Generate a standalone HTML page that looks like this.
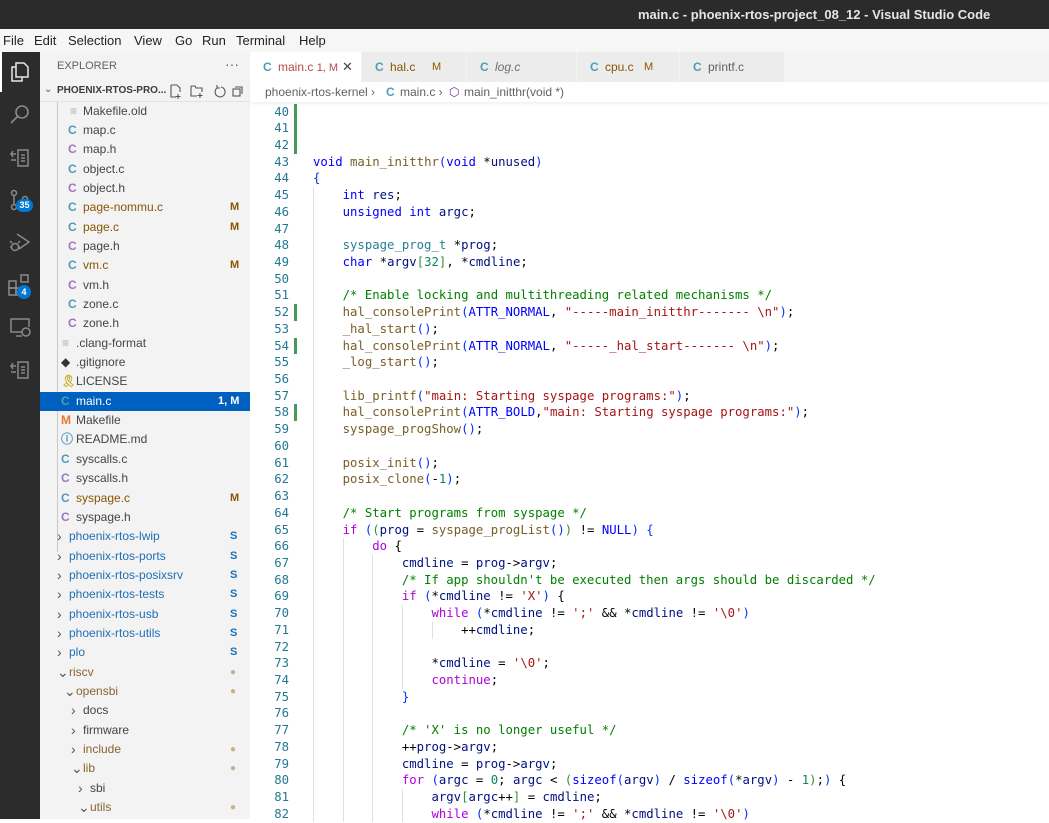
<!DOCTYPE html>
<html><head><meta charset="utf-8">
<style>
*{margin:0;padding:0;box-sizing:border-box}
body{width:1049px;height:819px;overflow:hidden;background:#fff;font-family:"Liberation Sans","DejaVu Sans",sans-serif;position:relative}
.abs{position:absolute}
#title{left:0;top:0;width:1049px;height:29px;background:#2b2b2b;color:#e6e6e6;font-weight:bold;font-size:13px}
#title span{position:absolute;left:638px;top:7px}
#menu{left:0;top:29px;width:1049px;height:23px;background:#f6f6f6;font-size:13px;color:#222}
#menu span{position:absolute;top:4px}
#act{left:0;top:52px;width:40px;height:767px;background:#2c2c2c}
#side{left:40px;top:52px;width:210px;height:767px;background:#f3f3f3;font-size:12px;color:#444}
.row{position:absolute;left:0;width:210px;height:19px;line-height:19px;white-space:nowrap}
.row .ic{position:absolute;font-weight:bold;font-size:12px}
.row .t{position:absolute}
.row .b{position:absolute;left:190px;font-size:11px;font-weight:bold}
.cc{color:#519aba}.ch{color:#a074c4}
.mod{color:#895503}.sub{color:#1f6fb5}.fold{color:#8a6430}
#tabs{left:250px;top:52px;width:799px;height:30px;background:#f3f3f3;font-size:12px}
.tab{position:absolute;top:0;height:30px;line-height:30px;background:#ececec;border-right:1px solid #f3f3f3}
.tab .ic{position:absolute;left:13px;font-weight:bold;color:#519aba}
.tab .t{position:absolute;left:28px}
#bc{left:250px;top:82px;width:799px;height:20px;background:#fff;font-size:12px;color:#616161;line-height:20px;box-shadow:0 2px 3px rgba(0,0,0,.06)}
#code{left:250px;top:102px;width:799px;height:717px;font-family:"DejaVu Sans Mono","Liberation Mono",monospace;font-size:12.3px;color:#001080}
.ln{position:absolute;left:0;width:39px;text-align:right;color:#237893;height:17px;line-height:17px}
.cl{position:absolute;left:63px;white-space:pre;height:17px;line-height:17px}
.g{position:absolute;left:44px;width:3px;background:#48985d}
.k{color:#0000ff}.f{color:#795e26}.s{color:#a31515}.c{color:#008000}.ty{color:#267f99}.n{color:#098658}.p{color:#af00db}.o{color:#000}.pa{color:#0431fa}.br{color:#319331}
.guide{position:absolute;width:1px;background:#e0e0e0}
</style></head><body>
<div id="title" class="abs"><span>main.c - phoenix-rtos-project_08_12 - Visual Studio Code</span></div>
<div id="menu" class="abs">
<span style="left:3px">File</span><span style="left:34px">Edit</span><span style="left:68px">Selection</span><span style="left:134px">View</span><span style="left:175px">Go</span><span style="left:202px">Run</span><span style="left:236px">Terminal</span><span style="left:299px">Help</span>
</div>
<div id="act" class="abs">
<div class="abs" style="left:0;top:0;width:2px;height:40px;background:#fff"></div>
<svg class="abs" style="left:8px;top:8px" width="24" height="24" viewBox="0 0 24 24" fill="none" stroke="#e8e8e8" stroke-width="1.5"><path d="M8 3h8l4 4v10H8z"/><path d="M8 7H4v14h10v-4"/></svg>
<svg class="abs" style="left:8px;top:51px" width="24" height="24" viewBox="0 0 24 24" fill="none" stroke="#8a8a8a" stroke-width="1.6"><circle cx="14" cy="9" r="6"/><path d="M10 13l-7 7"/></svg>
<svg class="abs" style="left:8px;top:93px" width="24" height="24" viewBox="0 0 24 24" fill="none" stroke="#8a8a8a" stroke-width="1.5"><rect x="10" y="5" width="10" height="16"/><path d="M13 10h4M13 13h4M13 16h4M3 9h5M5 6l-2 3 2 3M3 15h5"/></svg>
<svg class="abs" style="left:8px;top:136px" width="24" height="24" viewBox="0 0 24 24" fill="none" stroke="#8a8a8a" stroke-width="1.5"><circle cx="6" cy="5" r="2.5"/><circle cx="6" cy="19" r="2.5"/><circle cx="17" cy="11" r="2.5"/><path d="M6 7.5v9M17 13.5c0 3-5 3-9 5"/></svg>
<div class="abs" style="left:16px;top:147px;width:17px;height:13px;border-radius:7px;background:#0078d4;color:#fff;font-size:9px;font-weight:bold;text-align:center;line-height:13px">35</div>
<svg class="abs" style="left:8px;top:178px" width="24" height="24" viewBox="0 0 24 24" fill="none" stroke="#8a8a8a" stroke-width="1.5"><path d="M9 4l12 8-10 7"/><circle cx="7" cy="17" r="3.5"/><path d="M3 17h-1M12 17h-1M4 13l-2-2M10 13l2-2"/></svg>
<svg class="abs" style="left:7px;top:221px" width="24" height="24" viewBox="0 0 24 24" fill="none" stroke="#8a8a8a" stroke-width="1.5"><rect x="2" y="8" width="7" height="7"/><rect x="2" y="15" width="7" height="7"/><rect x="9" y="15" width="7" height="7"/><rect x="14" y="2" width="7" height="7"/></svg>
<div class="abs" style="left:17px;top:233px;width:14px;height:14px;border-radius:7px;background:#0078d4;color:#fff;font-size:9px;font-weight:bold;text-align:center;line-height:14px">4</div>
<svg class="abs" style="left:8px;top:263px" width="24" height="24" viewBox="0 0 24 24" fill="none" stroke="#8a8a8a" stroke-width="1.5"><path d="M14 17H3V4h18v8"/><path d="M8 21h6"/><circle cx="18" cy="17" r="4"/></svg>
<svg class="abs" style="left:8px;top:305px" width="24" height="24" viewBox="0 0 24 24" fill="none" stroke="#8a8a8a" stroke-width="1.5"><rect x="10" y="5" width="10" height="16"/><path d="M13 10h4M13 13h4M13 16h4M3 9h5M5 6l-2 3 2 3M3 15h5"/></svg>
</div>
<div id="side" class="abs">
<div class="abs" style="left:17px;top:8px;font-size:11px;color:#616161">EXPLORER</div>
<div class="abs" style="left:185px;top:4px;font-size:14px;color:#616161">···</div>
<div class="abs" style="left:4px;top:32px;font-size:10px;color:#555">&#8964;</div>
<div class="abs" style="left:17px;top:33px;font-size:10px;font-weight:bold;color:#3b3b3b">PHOENIX-RTOS-PRO...</div>
<svg class="abs" style="left:128px;top:31px" width="80" height="16" viewBox="0 0 80 16" fill="none" stroke="#555" stroke-width="1.1"><path d="M3 2h6l3 3v4M3 2v12h5M10 11v5M7.5 13.5h5"/><path d="M23 3h4l1 2h6v4M23 3v10h6M32 10v5M29.5 12.5h5"/><path d="M53 4a5 5 0 1 1-4 1M49 2v3h3"/><rect x="65" y="6" width="7" height="7"/><path d="M67 4h7v7"/></svg>
<div class="abs" style="left:0;top:49px;width:210px;height:1px;background:#e4e4e4"></div>
<div class="abs" style="left:17px;top:50px;width:1px;height:450px;background:#c8c8c8"></div>
<div class="abs" style="left:0;top:340px;width:210px;height:19px;background:#0060c0"></div>
<div id="rows"></div>
</div>
<div id="tabs" class="abs">
<div class="tab" style="left:0;width:112px;background:#fff"><span class="ic">C</span><span class="t" style="color:#b44a48">main.c <span style="font-size:11px">1, M</span></span><span class="abs" style="left:92px;color:#444;font-size:13px">✕</span></div>
<div class="tab" style="left:112px;width:105px"><span class="ic">C</span><span class="t" style="color:#895503">hal.c</span><span class="abs" style="left:70px;color:#895503;font-size:11px">M</span></div>
<div class="tab" style="left:217px;width:110px"><span class="ic">C</span><span class="t" style="color:#6f6f6f;font-style:italic">log.c</span></div>
<div class="tab" style="left:327px;width:103px"><span class="ic">C</span><span class="t" style="color:#895503">cpu.c</span><span class="abs" style="left:67px;color:#895503;font-size:11px">M</span></div>
<div class="tab" style="left:430px;width:105px"><span class="ic">C</span><span class="t" style="color:#616161">printf.c</span></div>
</div>
<div id="bc" class="abs"><span class="abs" style="left:15px">phoenix-rtos-kernel ›</span><span class="abs" style="left:136px;color:#519aba;font-weight:bold">C</span><span class="abs" style="left:150px">main.c ›</span><span class="abs" style="left:199px;color:#652d90">⬡</span><span class="abs" style="left:214px">main_initthr(void *)</span></div>
<div id="code" class="abs"></div>
<script>
var rows=[
[30,"≡","#aaa","Makefile.old",43,"#444",""],
[28,"C","cc","map.c",43,"",""],[28,"C","ch","map.h",43,"",""],[28,"C","cc","object.c",43,"",""],[28,"C","ch","object.h",43,"",""],
[28,"C","cc","page-nommu.c",43,"mod","M"],[28,"C","cc","page.c",43,"mod","M"],[28,"C","ch","page.h",43,"",""],[28,"C","cc","vm.c",43,"mod","M"],
[28,"C","ch","vm.h",43,"",""],[28,"C","cc","zone.c",43,"",""],[28,"C","ch","zone.h",43,"",""],
[22,"≡","#aaa",".clang-format",36,"",""],[21,"◆","#333",".gitignore",36,"",""],[21,"🎗","#c9b030","LICENSE",36,"",""],
[21,"C","sel","main.c",36,"selt","1, M"],[21,"M","#e37933","Makefile",36,"",""],[21,"ⓘ","#519aba","README.md",36,"",""],
[21,"C","cc","syscalls.c",36,"",""],[21,"C","ch","syscalls.h",36,"",""],[21,"C","cc","syspage.c",36,"mod","M"],[21,"C","ch","syspage.h",36,"",""],
[17,"›","#555","phoenix-rtos-lwip",29,"sub","S"],[17,"›","#555","phoenix-rtos-ports",29,"sub","S"],[17,"›","#555","phoenix-rtos-posixsrv",29,"sub","S"],
[17,"›","#555","phoenix-rtos-tests",29,"sub","S"],[17,"›","#555","phoenix-rtos-usb",29,"sub","S"],[17,"›","#555","phoenix-rtos-utils",29,"sub","S"],
[17,"›","#555","plo",29,"sub","S"],[17,"⌄","#555","riscv",29,"fold","●"],[24,"⌄","#555","opensbi",36,"fold","●"],
[31,"›","#555","docs",43,"",""],[31,"›","#555","firmware",43,"",""],[31,"›","#555","include",43,"fold","●"],[31,"⌄","#555","lib",43,"fold","●"],
[38,"›","#555","sbi",50,"",""],[38,"⌄","#555","utils",50,"fold","●"]];
var h="";rows.forEach(function(r,i){var top=49.5+i*19.35;var ic=r[2];var icst="",cls="";
if(ic=="cc"||ic=="ch")cls=ic;else if(ic=="sel")icst="color:#519aba";else icst="color:"+ic;
var tc=r[5],tcls="",tst="";if(tc=="mod"||tc=="sub"||tc=="fold")tcls=tc;else if(tc=="selt")tst="color:#fff";else if(tc)tst="color:"+tc;
var bst="";if(tc=="mod")bst="color:#895503";else if(tc=="sub")bst="color:#1f6fb5";else if(tc=="fold")bst="color:#c8b08c;font-size:10px";else if(tc=="selt")bst="color:#fff;left:178px";
var isChev=(r[1]=="›"||r[1]=="⌄");
h+='<div class="row" style="top:'+top+'px"><span class="ic '+cls+'" style="left:'+r[0]+'px;'+icst+(isChev?';font-weight:normal;font-size:14px':'')+'">'+r[1]+'</span><span class="t '+tcls+'" style="left:'+r[4]+'px;'+tst+'">'+r[3]+'</span>'+(r[6]?'<span class="b" style="'+bst+'">'+r[6]+'</span>':'')+'</div>';});
document.getElementById("rows").innerHTML=h;
function e(s){return s.replace(/&/g,"&amp;").replace(/</g,"&lt;")}
var K=function(x){return '<span class="k">'+e(x)+'</span>'},F=function(x){return '<span class="f">'+e(x)+'</span>'},S=function(x){return '<span class="s">'+e(x)+'</span>'},C=function(x){return '<span class="c">'+e(x)+'</span>'},T=function(x){return '<span class="ty">'+e(x)+'</span>'},N=function(x){return '<span class="n">'+e(x)+'</span>'},P=function(x){return '<span class="p">'+e(x)+'</span>'},O=function(x){return '<span class="o">'+e(x)+'</span>'},A=function(x){return '<span class="pa">'+e(x)+'</span>'};
var I="    ";
var L={
43:K("void")+" "+F("main_initthr")+A("(")+K("void")+O(" *")+"unused"+A(")"),
44:A("{"),
45:I+K("int")+" res"+O(";"),
46:I+K("unsigned int")+" argc"+O(";"),
48:I+T("syspage_prog_t")+O(" *")+"prog"+O(";"),
49:I+K("char")+O(" *")+"argv"+'<span class="br">[</span>'+N("32")+'<span class="br">]</span>'+O(", *")+"cmdline"+O(";"),
51:I+C("/* Enable locking and multithreading related mechanisms */"),
52:I+F("hal_consolePrint")+A("(")+K("ATTR_NORMAL")+O(", ")+S('"-----main_initthr------- \\n"')+A(")")+O(";"),
53:I+F("_hal_start")+A("()")+O(";"),
54:I+F("hal_consolePrint")+A("(")+K("ATTR_NORMAL")+O(", ")+S('"-----_hal_start------- \\n"')+A(")")+O(";"),
55:I+F("_log_start")+A("()")+O(";"),
57:I+F("lib_printf")+A("(")+S('"main: Starting syspage programs:"')+A(")")+O(";"),
58:I+F("hal_consolePrint")+A("(")+K("ATTR_BOLD")+O(",")+S('"main: Starting syspage programs:"')+A(")")+O(";"),
59:I+F("syspage_progShow")+A("()")+O(";"),
61:I+F("posix_init")+A("()")+O(";"),
62:I+F("posix_clone")+A("(")+O("-")+N("1")+A(")")+O(";"),
64:I+C("/* Start programs from syspage */"),
65:I+P("if")+O(" ")+A("(")+'<span class="br">(</span>'+"prog"+O(" = ")+F("syspage_progList")+A("()")+'<span class="br">)</span>'+O(" != ")+K("NULL")+A(")")+O(" ")+A("{"),
66:I+I+P("do")+O(" {"),
67:I+I+I+"cmdline"+O(" = ")+"prog"+O("->")+"argv"+O(";"),
68:I+I+I+C("/* If app shouldn't be executed then args should be discarded */"),
69:I+I+I+P("if")+O(" ")+A("(")+O("*")+"cmdline"+O(" != ")+S("'X'")+A(")")+O(" {"),
70:I+I+I+I+P("while")+O(" ")+A("(")+O("*")+"cmdline"+O(" != ")+S("';'")+O(" && *")+"cmdline"+O(" != ")+S("'\\0'")+A(")"),
71:I+I+I+I+I+O("++")+"cmdline"+O(";"),
73:I+I+I+I+O("*")+"cmdline"+O(" = ")+S("'\\0'")+O(";"),
74:I+I+I+I+P("continue")+O(";"),
75:I+I+I+A("}"),
77:I+I+I+C("/* 'X' is no longer useful */"),
78:I+I+I+O("++")+"prog"+O("->")+"argv"+O(";"),
79:I+I+I+"cmdline"+O(" = ")+"prog"+O("->")+"argv"+O(";"),
80:I+I+I+P("for")+O(" ")+A("(")+"argc"+O(" = ")+N("0")+O("; ")+"argc"+O(" < ")+'<span class="br">(</span>'+K("sizeof")+A("(")+"argv"+A(")")+O(" / ")+K("sizeof")+A("(")+O("*")+"argv"+A(")")+O(" - ")+N("1")+'<span class="br">)</span>'+O(";")+A(")")+O(" {"),
81:I+I+I+I+"argv"+'<span class="br">[</span>'+"argc"+O("++")+'<span class="br">]</span>'+O(" = ")+"cmdline"+O(";"),
82:I+I+I+I+P("while")+O(" ")+A("(")+O("*")+"cmdline"+O(" != ")+S("';'")+O(" && *")+"cmdline"+O(" != ")+S("'\\0'")+A(")")
};
var lh=16.72,top0=1.5,c="";
for(var n=40;n<=82;n++){var t=top0+(n-40)*lh;c+='<div class="ln" style="top:'+t+'px">'+n+'</div>';if(L[n])c+='<div class="cl" style="top:'+t+'px">'+L[n]+'</div>';}
[[40,3],[52,1],[54,1],[58,1]].forEach(function(g){c+='<div class="g" style="top:'+(top0+(g[0]-40)*lh)+'px;height:'+(g[1]*lh)+'px"></div>'});
var cw=7.41;
function guide(col,a,b){c+='<div class="guide" style="left:'+(63+col*cw)+'px;top:'+(top0+(a-40)*lh)+'px;height:'+((b-a+1)*lh)+'px"></div>'}
guide(0,45,82);guide(4,66,82);guide(8,67,82);guide(12,70,74);guide(16,71,71);guide(12,81,82);
document.getElementById("code").innerHTML=c;
</script>
</body></html>
